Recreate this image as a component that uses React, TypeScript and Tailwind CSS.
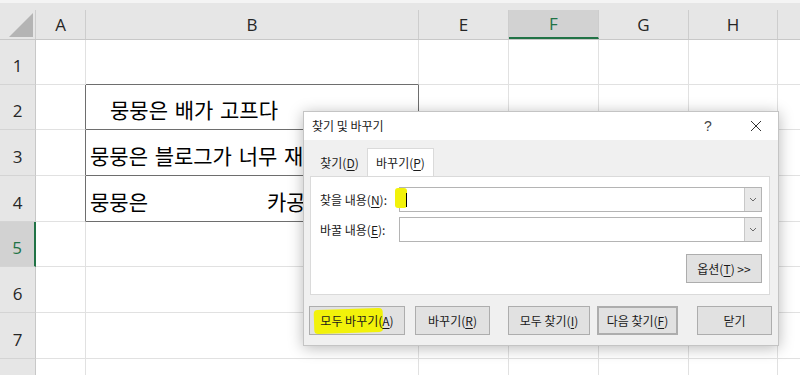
const cols = [
  { key: "A", w: "w-[50px]" },
  { key: "B", w: "w-[333px]" },
  { key: "E", w: "w-[90px]" },
  { key: "F", w: "w-[90px]" },
  { key: "G", w: "w-[90px]" },
  { key: "H", w: "w-[89px]" },
];

const rows = [
  { n: 1, h: "h-[45px]" },
  { n: 2, h: "h-[45px]" },
  { n: 3, h: "h-[46px]" },
  { n: 4, h: "h-[46px]" },
  { n: 5, h: "h-[45px]" },
  { n: 6, h: "h-[46px]" },
  { n: 7, h: "h-[46px]" },
  { n: 8, h: "h-[46px]" },
];

const ko = "font-['Noto_Sans_CJK_KR',sans-serif]";

function U({ children }: { children: string }) {
  return <span className="underline underline-offset-[2px] decoration-[1px]">{children}</span>;
}

function BCell({ n }: { n: number }) {
  if (n === 2)
    return <span className="pl-[24px] whitespace-nowrap">뭉뭉은 배가 고프다</span>;
  if (n === 3)
    return <span className="pl-[4px] whitespace-nowrap">뭉뭉은 블로그가 너무 재미있다</span>;
  if (n === 4)
    return (
      <span className="flex w-full pl-[4px] whitespace-nowrap">
        <span className="w-[177px] shrink-0">뭉뭉은</span>
        <span>카공을 좋아한다</span>
      </span>
    );
  return null;
}

function Sheet() {
  return (
    <div className="flex flex-col">
      {/* formula bar edge */}
      <div className="h-[10px] border-t-[3px] border-[#f4f4f4] bg-[#e6e6e6]" />
      {/* column header */}
      <div className="flex h-[30px] bg-[#e6e6e6] border-b border-[#c8c8c8] font-['Open_Sans',sans-serif] text-[17px] text-[#262626]">
        <div className="relative w-[36px] shrink-0 border-r border-[#cdcdcd]">
          <svg className="absolute right-[2px] bottom-[2px]" width="24" height="24" viewBox="0 0 24 24">
            <polygon points="24,0 24,24 0,24" fill="#b4b4b4" />
          </svg>
        </div>
        {cols.map((c) => (
          <div
            key={c.key}
            className={`${c.w} shrink-0 flex items-center justify-center border-r border-[#cdcdcd] ${
              c.key === "F" ? "bg-[#d2d2d2] text-[#217346] border-b-2 border-b-[#217346]" : ""
            }`}
          >
            {c.key}
          </div>
        ))}
        <div className="flex-1" />
      </div>
      {rows.map((r) => (
        <div key={r.n} className={`flex ${r.h}`}>
          <div
            className={`w-[36px] shrink-0 flex items-end justify-center pb-[6px] border-b border-[#d4d4d4] font-['Open_Sans',sans-serif] text-[17px] ${
              r.n === 5
                ? "bg-[#d2d2d2] text-[#217346] border-r-2 border-r-[#217346]"
                : "bg-[#e6e6e6] text-[#262626] border-r border-r-[#c8c8c8]"
            }`}
          >
            {r.n < 8 ? r.n : null}
          </div>
          {cols.map((c) => {
            const boxed = r.n >= 2 && r.n <= 4;
            let cls = "border-b border-r border-[#e1e1e1]";
            if (c.key === "A" && boxed) cls = "border-b border-[#e1e1e1] border-r border-r-[#6e6e6e]";
            if (c.key === "B" && r.n === 1) cls = "border-r border-[#e1e1e1] border-b border-b-[#6e6e6e]";
            if (c.key === "B" && boxed) cls = "border-b border-r border-[#6e6e6e]";
            return (
              <div
                key={c.key}
                className={`${c.w} shrink-0 flex items-end pb-[6px] overflow-hidden ${cls} ${ko} text-[21px] leading-[28px] [word-spacing:2px] text-black`}
              >
                {c.key === "B" && <BCell n={r.n} />}
              </div>
            );
          })}
          <div className="flex-1 border-b border-[#e1e1e1]" />
        </div>
      ))}
    </div>
  );
}

function Btn({
  children,
  w,
  cls = "",
}: {
  children: React.ReactNode;
  w: string;
  cls?: string;
}) {
  return (
    <div
      className={`${w} h-[29px] shrink-0 flex items-center justify-center bg-[#e1e1e1] border border-[#adadad] text-[12px] text-[#1a1a1a] ${cls}`}
    >
      {children}
    </div>
  );
}

function Combo() {
  return (
    <div className="flex h-[25px] w-[363px] border border-[#b4b4b4] bg-white">
      <div className="flex-1" />
      <div className="w-[17px] flex items-center justify-center bg-[#e8e8e8] border-l border-[#c8c8c8]">
        <svg width="8" height="5" viewBox="0 0 8 5">
          <path d="M1 1 L4 4 L7 1" fill="none" stroke="#6a6a6a" strokeWidth="1" />
        </svg>
      </div>
    </div>
  );
}

function Dialog() {
  return (
    <div
      className={`absolute left-[303px] top-[111px] w-[476px] h-[235px] flex flex-col bg-[#f0f0f0] border border-[#c4c4c4] shadow-[0_2px_14px_rgba(0,0,0,0.28)] ${ko} text-[12px] text-[#1a1a1a]`}
    >
      {/* title bar */}
      <div className="h-[28px] shrink-0 flex items-center bg-white pl-[8px]">
        <span className="flex-1">찾기 및 바꾸기</span>
        <span className="w-[12px] text-[14px] text-[#444] font-['Liberation_Sans',sans-serif] mr-[34px]">?</span>
        <svg className="mr-[16px]" width="12" height="12" viewBox="0 0 12 12">
          <path d="M1 1 L11 11 M11 1 L1 11" stroke="#333" strokeWidth="1" />
        </svg>
      </div>
      {/* tabs */}
      <div className="flex items-end h-[36px] pl-[8px]">
        <div className="h-[26px] w-[55px] flex items-center justify-center">
          찾기(<U>D</U>)
        </div>
        <div className="h-[28px] w-[67px] flex items-center justify-center bg-white border border-b-0 border-[#dadada]">
          바꾸기(<U>P</U>)
        </div>
      </div>
      {/* panel */}
      <div className="mx-[6px] mr-[8px] h-[119px] flex flex-col bg-white border border-[#dadada] pt-[10px] pl-[9px] pr-[7px]">
        <div className="flex items-center">
          <span className="w-[79px] whitespace-nowrap">
            찾을 내용(<U>N</U>):
          </span>
          <div className="relative">
            <Combo />
            <div className="absolute left-[-4px] top-[1px] w-[12px] h-[20px] bg-[#f2f20a] rounded-[3px]" />
            <div className="absolute left-[7px] top-[6px] w-[1px] h-[14px] bg-black" />
          </div>
        </div>
        <div className="flex items-center mt-[5px]">
          <span className="w-[79px] whitespace-nowrap">
            바꿀 내용(<U>E</U>):
          </span>
          <Combo />
        </div>
        <div className="flex justify-end mt-[12px]">
          <Btn w="w-[76px]" cls="h-[28px]">
            옵션(<U>T</U>) &gt;&gt;
          </Btn>
        </div>
      </div>
      {/* buttons */}
      <div className="flex mt-[11px] pl-[5px]">
        <Btn w="w-[96px]">
          <span className="relative">
            <span className="absolute left-[-6px] right-[10px] top-[-3px] bottom-[-3px] bg-[#f2f20a] rounded-[4px] -rotate-2" />
            <span className="relative">
              모두 바꾸기(<U>A</U>)
            </span>
          </span>
        </Btn>
        <Btn w="w-[75px]" cls="ml-[10px]">
          바꾸기(<U>R</U>)
        </Btn>
        <Btn w="w-[82px]" cls="ml-[18px]">
          모두 찾기(<U>I</U>)
        </Btn>
        <Btn w="w-[81px]" cls="ml-[7px] border-2 border-[#4a90d2]">
          다음 찾기(<U>F</U>)
        </Btn>
        <Btn w="w-[75px]" cls="ml-[19px]">
          닫기
        </Btn>
      </div>
    </div>
  );
}

export default function App() {
  return (
    <div className="relative w-[800px] h-[375px] overflow-hidden bg-white">
      <Sheet />
      <Dialog />
    </div>
  );
}
